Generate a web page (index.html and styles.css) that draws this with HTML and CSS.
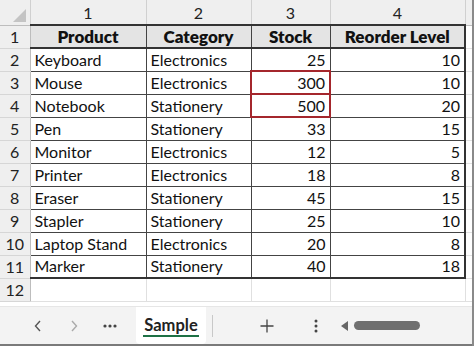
FILE: index.html
```html
<!DOCTYPE html>
<html>
<head>
<meta charset="utf-8">
<link rel="stylesheet" href="styles.css">
</head>
<body>
<div class="app">
  <div class="sheet">
    <table class="grid">
      <colgroup>
        <col class="c0"><col class="c1"><col class="c2"><col class="c3"><col class="c4"><col class="c5">
      </colgroup>
      <thead>
        <tr class="colhead">
          <th class="corner"><span class="tri"></span></th>
          <th>1</th><th>2</th><th>3</th><th>4</th><th class="rest"></th>
        </tr>
      </thead>
      <tbody>
        <tr class="hdr"><th class="rh">1</th><td>Product</td><td>Category</td><td>Stock</td><td class="last">Reorder Level</td><td class="rest"></td></tr>
        <tr><th class="rh">2</th><td>Keyboard</td><td>Electronics</td><td class="n">25</td><td class="n last">10</td><td class="rest"></td></tr>
        <tr><th class="rh">3</th><td>Mouse</td><td>Electronics</td><td class="n sel">300</td><td class="n last">10</td><td class="rest"></td></tr>
        <tr><th class="rh">4</th><td>Notebook</td><td>Stationery</td><td class="n sel">500</td><td class="n last">20</td><td class="rest"></td></tr>
        <tr><th class="rh">5</th><td>Pen</td><td>Stationery</td><td class="n">33</td><td class="n last">15</td><td class="rest"></td></tr>
        <tr><th class="rh">6</th><td>Monitor</td><td>Electronics</td><td class="n">12</td><td class="n last">5</td><td class="rest"></td></tr>
        <tr><th class="rh">7</th><td>Printer</td><td>Electronics</td><td class="n">18</td><td class="n last">8</td><td class="rest"></td></tr>
        <tr><th class="rh">8</th><td>Eraser</td><td>Stationery</td><td class="n">45</td><td class="n last">15</td><td class="rest"></td></tr>
        <tr><th class="rh">9</th><td>Stapler</td><td>Stationery</td><td class="n">25</td><td class="n last">10</td><td class="rest"></td></tr>
        <tr><th class="rh">10</th><td>Laptop Stand</td><td>Electronics</td><td class="n">20</td><td class="n last">8</td><td class="rest"></td></tr>
        <tr class="lastrow"><th class="rh">11</th><td>Marker</td><td>Stationery</td><td class="n">40</td><td class="n last">18</td><td class="rest"></td></tr>
        <tr class="empty"><th class="rh">12</th><td></td><td></td><td></td><td></td><td class="rest"></td></tr>
      </tbody>
    </table>
  </div>
  <div class="tabbar">
    <div class="nav">
      <span class="navbtn">
        <svg width="10" height="14" viewBox="0 0 10 14"><path d="M7 2 L2.5 7 L7 12" fill="none" stroke="#555" stroke-width="1.4"/></svg>
      </span>
      <span class="navbtn">
        <svg width="10" height="14" viewBox="0 0 10 14"><path d="M3 2 L7.5 7 L3 12" fill="none" stroke="#aaa" stroke-width="1.4"/></svg>
      </span>
      <span class="navbtn dots">
        <svg width="14" height="4" viewBox="0 0 14 4"><circle cx="2" cy="2" r="1.6" fill="#444"/><circle cx="7" cy="2" r="1.6" fill="#444"/><circle cx="12" cy="2" r="1.6" fill="#444"/></svg>
      </span>
    </div>
    <div class="tab"><span class="tablabel">Sample</span></div>
    <div class="sep"></div>
    <span class="plus">
      <svg width="14" height="14" viewBox="0 0 14 14"><path d="M7 0.5 V13.5 M0.5 7 H13.5" stroke="#444" stroke-width="1.3"/></svg>
    </span>
    <span class="vdots">
      <svg width="4" height="14" viewBox="0 0 4 14"><circle cx="2" cy="2" r="1.5" fill="#444"/><circle cx="2" cy="7" r="1.5" fill="#444"/><circle cx="2" cy="12" r="1.5" fill="#444"/></svg>
    </span>
    <div class="hscroll">
      <svg width="8" height="10" viewBox="0 0 8 10"><path d="M7 0 V10 L0 5 Z" fill="#666"/></svg>
      <span class="thumb"></span>
    </div>
  </div>
</div>
</body>
</html>
```
FILE: styles.css
```css
html, body {
  margin: 0;
  padding: 0;
  background: #ffffff;
}
.app {
  width: 474px;
  height: 346px;
  display: flex;
  flex-direction: column;
  overflow: hidden;
  font-family: "Lato", "Open Sans", sans-serif;
  border-right: 2px solid #8a8a8a;
  box-sizing: border-box;
}
.sheet {
  height: 306px;
  overflow: hidden;
  background: #fff;
}
.grid {
  border-collapse: collapse;
  table-layout: fixed;
  width: 490px;
  font-size: 16px;
  color: #111;
}
.c0 { width: 30px; }
.c1 { width: 116px; }
.c2 { width: 105px; }
.c3 { width: 79px; }
.c4 { width: 135px; }
.c5 { width: 25px; }
.colhead th {
  height: 24px;
  padding: 0;
  background: #efefef;
  font-weight: normal;
  border-right: 1px solid #d0d0d0;
  border-bottom: 1px solid #bdbdbd;
  text-align: center;
  color: #222;
  font-size: 16px;
}
.colhead th.rest { border-right: none; }
.corner { position: relative; }
.tri {
  position: absolute;
  right: 4px;
  bottom: 3px;
  width: 0;
  height: 0;
  border-left: 13px solid transparent;
  border-bottom: 13px solid #c4c4c4;
}
th.rh {
  background: #efefef;
  font-weight: normal;
  padding: 0;
  text-align: center;
  border-right: 1px solid #bdbdbd;
  border-bottom: 1px solid #d6d6d6;
  color: #222;
  font-size: 16px;
}
tbody tr { height: 23px; }
td {
  padding: 0 4px;
  border: 1px solid #444;
  white-space: nowrap;
  overflow: hidden;
  line-height: 20px;
}
td.n { text-align: right; }
td.last { border-right: 2px solid #333; }
.hdr td {
  background: #e4e4e4;
  font-weight: 800;
  font-size: 17px;
  text-align: center;
  border-top: 2px solid #333;
  border-bottom: 2px solid #333;
}
.lastrow td { border-bottom: 2px solid #333; }
td.rest {
  border: none;
  border-bottom: 1px solid #e2e2e2;
}
.hdr td.rest { background: #fff; border: none; border-bottom: 1px solid #e2e2e2; }
.empty td {
  border: none;
  border-right: 1px solid #e0e0e0;
  border-bottom: 1px solid #e0e0e0;
}
td.sel {
  border: 2px solid #a4262c;
}
.tabbar {
  height: 40px;
  background: #f3f3f3;
  border-top: 1px solid #e6e6e6;
  border-bottom: 2px solid #7a7a7a;
  display: flex;
  align-items: center;
  box-sizing: border-box;
}
.nav {
  display: flex;
  align-items: center;
  width: 136px;
}
.navbtn {
  display: flex;
  justify-content: center;
  align-items: center;
  width: 36px;
}
.navbtn:first-child { margin-left: 20px; }
.tab {
  align-self: stretch;
  background: #fff;
  width: 70px;
  display: flex;
  align-items: center;
  justify-content: center;
  border-radius: 0 0 4px 4px;
}
.tablabel {
  font-weight: bold;
  font-size: 16.5px;
  color: #222;
  border-bottom: 2px solid #1e7145;
  line-height: 20px;
  padding: 0 1px;
}
.sep {
  width: 1px;
  height: 22px;
  background: #c8c8c8;
  margin-left: 6px;
}
.plus {
  display: flex;
  margin-left: 47px;
}
.vdots {
  display: flex;
  margin-left: 40px;
}
.hscroll {
  display: flex;
  align-items: center;
  margin-left: 23px;
  gap: 5px;
}
.thumb {
  width: 66px;
  height: 9px;
  background: #6f6f6f;
  border-radius: 5px;
}
```
